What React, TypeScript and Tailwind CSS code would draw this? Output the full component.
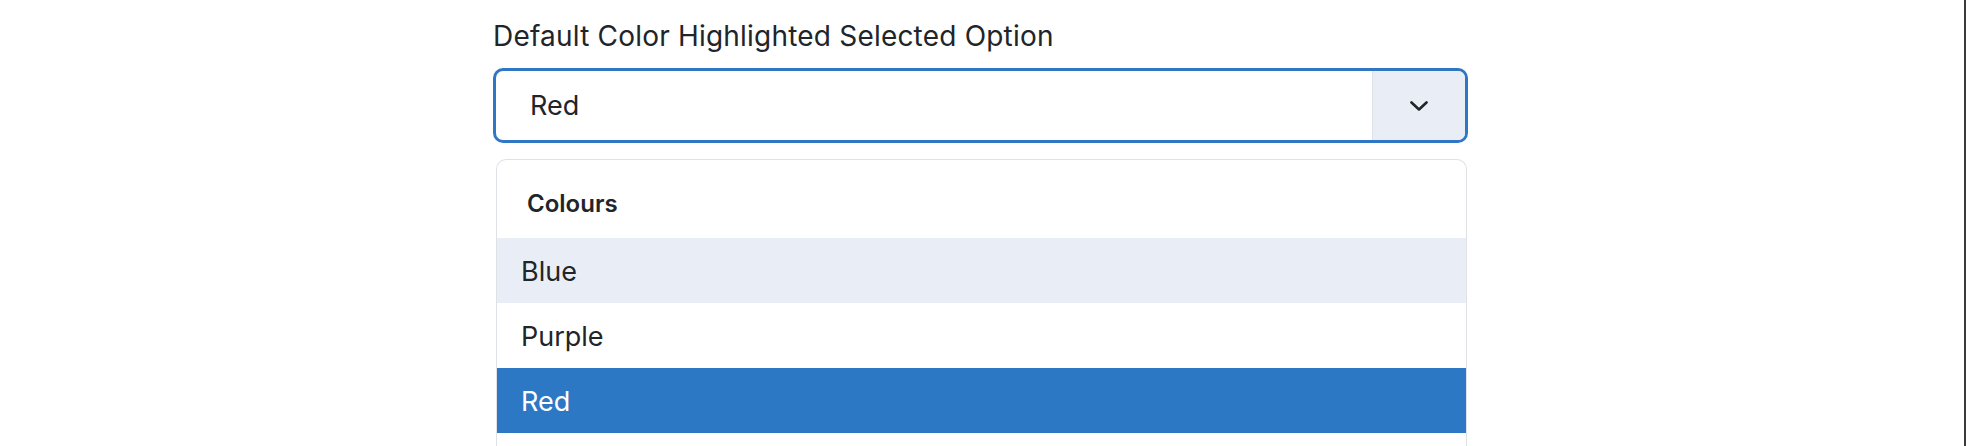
import React from 'react';

const options = [
  { label: 'Blue', state: 'hover' },
  { label: 'Purple', state: 'idle' },
  { label: 'Red', state: 'selected' },
];

function Chevron() {
  return (
    <svg width="18" height="10" viewBox="0 0 18 10" fill="none">
      <path d="M1.5 1.5L9 8.5L16.5 1.5" stroke="#212529" strokeWidth="2.6" strokeLinecap="round" strokeLinejoin="round" />
    </svg>
  );
}

export default function App() {
  return (
    <div
      className="w-full h-[446px] overflow-hidden bg-white border-r-2 border-[#3a3a3a] text-[#212529]"
      style={{ fontFamily: 'Inter, "Noto Sans", sans-serif' }}
    >
      <div className="ml-[493px] w-[975px] flex flex-col">
        <label className="mt-[21px] text-[28px] leading-[30px] tracking-[0.2px]">Default Color Highlighted Selected Option</label>

        {/* Select */}
        <div className="mt-[17px] h-[75px] flex border-[3px] border-[#2f77c5] rounded-[10px] overflow-hidden">
          <div className="flex-1 flex items-center pl-[34px] pt-[2px] text-[27px]">Red</div>
          <div className="w-[93px] flex items-center justify-center bg-[#e9eef6] border-l border-[#dee2e6]">
            <Chevron />
          </div>
        </div>

        {/* Menu */}
        <div className="mt-[16px] ml-[3px] mr-[1px] border border-b-0 border-[#dee2e6] rounded-t-[10px] flex flex-col">
          <div className="h-[78px] flex items-center pl-[30px] pt-[10px] text-[24px] font-semibold">Colours</div>
          {options.map((o) => (
            <div
              key={o.label}
              className={
                'h-[65px] flex items-center pl-[24px] pt-[3px] text-[27px] ' +
                (o.state === 'hover'
                  ? 'bg-[#e9eef6]'
                  : o.state === 'selected'
                  ? 'bg-[#2d78c5] text-white'
                  : '')
              }
            >
              {o.label}
            </div>
          ))}
          <div className="h-[40px]" />
        </div>
      </div>
    </div>
  );
}
